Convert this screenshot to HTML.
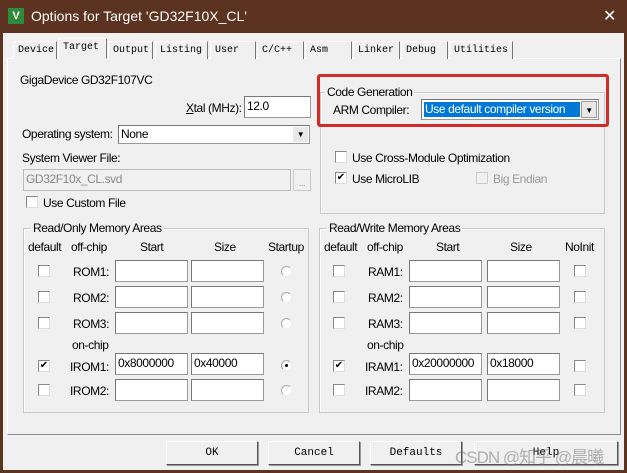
<!DOCTYPE html>
<html><head><meta charset="utf-8"><style>
*{box-sizing:border-box;margin:0;padding:0}
body{width:627px;height:473px;background:#f0f0f0;position:relative;overflow:hidden;font-family:"Liberation Sans",sans-serif;font-size:12px;letter-spacing:-0.4px;color:#000}
.a{position:absolute;white-space:nowrap}
.title{left:0;top:0;width:627px;height:33px;background:#5b3320;color:#fff;font-size:14px;letter-spacing:0}
.win{left:0;top:33px;width:627px;height:440px;border:3px solid #5b3320;border-top:0}
.tab{position:absolute;top:41px;height:18px;border:1px solid #fff;border-right-color:#777;border-bottom:0;font-family:"Liberation Mono",monospace;font-size:10px;letter-spacing:0;padding:3px 0 0 4px;background:#f0f0f0}
.panel{left:7px;top:58px;width:614px;height:377px;border:1px solid #fff;border-right-color:#888;border-bottom-color:#888}
.grp{position:absolute;border:1px solid #c8c8c8;box-shadow:inset 1px 1px #fff}
.gl{position:absolute;background:#f0f0f0;padding:0 2px;top:-8px}
.in{position:absolute;background:#fff;border:1px solid #999;border-top-color:#777;border-left-color:#777;height:22px;font-size:12px;padding:2px 2px}
.cb{position:absolute;width:12px;height:12px;background:#fff;border:1px solid #888;border-right-color:#ddd;border-bottom-color:#ddd;letter-spacing:0}
.rd{position:absolute;width:11px;height:11px;border-radius:50%;border:1px solid #aaa;border-right-color:#eee;border-bottom-color:#eee;background:#fff}
.btn{position:absolute;top:441px;height:24px;border:1px solid #fff;border-right-color:#555;border-bottom-color:#555;box-shadow:1px 1px #999;text-align:center;font-family:"Liberation Mono",monospace;font-size:11px;letter-spacing:0;padding-top:5px}
</style></head><body>
<div class="a title"><div class="a" style="left:8px;top:8px;width:16px;height:16px;background:#2f8a3a;color:#fff;font-size:11px;font-weight:bold;text-align:center;line-height:16px">V</div><div class="a" style="left:31px;top:8px">Options for Target 'GD32F10X_CL'</div><div class="a" style="left:603px;top:6px;font-size:16px">✕</div></div>
<div class="a win"></div>
<div class="a panel"></div>
<div class="tab" style="left:13px;width:44px">Device</div>
<div class="tab" style="left:58px;width:49px;top:38px;height:21px;border-bottom:1px solid #f0f0f0">Target</div>
<div class="tab" style="left:108px;width:45px">Output</div>
<div class="tab" style="left:155px;width:53px">Listing</div>
<div class="tab" style="left:210px;width:46px">User</div>
<div class="tab" style="left:257px;width:47px">C/C++</div>
<div class="tab" style="left:305px;width:47px">Asm</div>
<div class="tab" style="left:353px;width:47px">Linker</div>
<div class="tab" style="left:401px;width:47px">Debug</div>
<div class="tab" style="left:449px;width:64px">Utilities</div>

<div class="a" style="left:20px;top:73px">GigaDevice GD32F107VC</div>
<div class="a" style="left:186px;top:101px"><u>X</u>tal (MHz):</div>
<div class="in" style="left:244px;top:96px;width:67px">12.0</div>
<div class="a" style="left:22px;top:127px">Operating system:</div>
<div class="in" style="left:118px;top:125px;width:192px;height:19px;padding-top:1px">None<div class="a" style="right:1px;top:1px;width:15px;height:15px;background:#e8e8e8;font-size:8px;text-align:center;line-height:15px">▼</div></div>
<div class="a" style="left:22px;top:151px">System Viewer File:</div>
<div class="in" style="left:23px;top:169px;width:268px;background:#f0f0f0;color:#888;border-color:#bbb">GD32F10x_CL.svd</div>
<div class="a" style="left:293px;top:169px;width:18px;height:22px;border:1px solid #ccc;font-size:9px;color:#888;text-align:center;line-height:26px">...</div>
<div class="cb" style="left:26px;top:196px"></div><div class="a" style="left:43px;top:196px">Use Custom File</div>

<div class="a" style="left:317px;top:74px;width:292px;height:53px;border:3px solid #d42a2a;border-radius:3px;z-index:2"></div>
<div class="grp" style="left:320px;top:92px;width:285px;height:122px"><div class="gl" style="left:4px">Code Generation</div></div>
<div class="a" style="left:333px;top:103px">ARM Compiler:</div>
<div class="in" style="left:421px;top:99px;width:178px;height:21px;padding:1px">
<div class="a" style="left:2px;top:2px;width:156px;height:15px;background:#0078d7;color:#fff;padding-left:1px;line-height:15px">Use default compiler version</div>
<div class="a" style="right:1px;top:1px;width:16px;height:17px;background:#e8e8e8;font-size:8px;text-align:center;line-height:17px;border:1px solid #999">▼</div></div>
<div class="cb" style="left:335px;top:151px"></div><div class="a" style="left:352px;top:151px">Use Cross-Module Optimization</div>
<div class="cb" style="left:335px;top:172px;font-size:10px;line-height:10px;text-align:center">✔</div><div class="a" style="left:352px;top:172px">Use MicroLIB</div>
<div class="cb" style="left:476px;top:172px;background:#f0f0f0;border-color:#ccc"></div><div class="a" style="left:493px;top:172px;color:#999">Big Endian</div>

<div class="grp" style="left:23px;top:228px;width:286px;height:185px"><div class="gl" style="left:7px">Read/Only Memory Areas</div></div>
<div class="a" style="left:28px;top:240px">default</div><div class="a" style="left:71px;top:240px">off-chip</div><div class="a" style="left:140px;top:240px">Start</div><div class="a" style="left:214px;top:240px">Size</div><div class="a" style="left:268px;top:240px">Startup</div>
<div class="a" style="left:72px;top:338px">on-chip</div>

<div class="grp" style="left:319px;top:228px;width:286px;height:185px"><div class="gl" style="left:7px">Read/Write Memory Areas</div></div>
<div class="a" style="left:324px;top:240px">default</div><div class="a" style="left:367px;top:240px">off-chip</div><div class="a" style="left:436px;top:240px">Start</div><div class="a" style="left:510px;top:240px">Size</div><div class="a" style="left:565px;top:240px">NoInit</div>
<div class="a" style="left:367px;top:338px">on-chip</div>

<div class="cb" style="left:38px;top:265px"></div><div class="a" style="left:73px;top:265px">ROM1:</div><div class="in" style="left:115px;top:260px;width:73px"></div><div class="in" style="left:191px;top:260px;width:73px"></div><div class="rd" style="left:281px;top:266px"></div>
<div class="cb" style="left:38px;top:291px"></div><div class="a" style="left:73px;top:291px">ROM2:</div><div class="in" style="left:115px;top:286px;width:73px"></div><div class="in" style="left:191px;top:286px;width:73px"></div><div class="rd" style="left:281px;top:292px"></div>
<div class="cb" style="left:38px;top:317px"></div><div class="a" style="left:73px;top:317px">ROM3:</div><div class="in" style="left:115px;top:312px;width:73px"></div><div class="in" style="left:191px;top:312px;width:73px"></div><div class="rd" style="left:281px;top:318px"></div>
<div class="cb" style="left:38px;top:360px;font-size:10px;line-height:10px;text-align:center">✔</div><div class="a" style="left:70px;top:360px">IROM1:</div><div class="in" style="left:115px;top:353px;width:73px">0x8000000</div><div class="in" style="left:191px;top:353px;width:73px">0x40000</div><div class="rd" style="left:281px;top:360px"><div class="a" style="left:3px;top:3px;width:3px;height:3px;background:#000;border-radius:50%"></div></div>
<div class="cb" style="left:38px;top:384px"></div><div class="a" style="left:70px;top:384px">IROM2:</div><div class="in" style="left:115px;top:379px;width:73px"></div><div class="in" style="left:191px;top:379px;width:73px"></div><div class="rd" style="left:281px;top:385px"></div>

<div class="cb" style="left:333px;top:265px"></div><div class="a" style="left:368px;top:265px">RAM1:</div><div class="in" style="left:409px;top:260px;width:73px"></div><div class="in" style="left:487px;top:260px;width:73px"></div><div class="cb" style="left:574px;top:265px"></div>
<div class="cb" style="left:333px;top:291px"></div><div class="a" style="left:368px;top:291px">RAM2:</div><div class="in" style="left:409px;top:286px;width:73px"></div><div class="in" style="left:487px;top:286px;width:73px"></div><div class="cb" style="left:574px;top:291px"></div>
<div class="cb" style="left:333px;top:317px"></div><div class="a" style="left:368px;top:317px">RAM3:</div><div class="in" style="left:409px;top:312px;width:73px"></div><div class="in" style="left:487px;top:312px;width:73px"></div><div class="cb" style="left:574px;top:317px"></div>
<div class="cb" style="left:333px;top:360px;font-size:10px;line-height:10px;text-align:center">✔</div><div class="a" style="left:365px;top:360px">IRAM1:</div><div class="in" style="left:409px;top:353px;width:73px">0x20000000</div><div class="in" style="left:487px;top:353px;width:73px">0x18000</div><div class="cb" style="left:574px;top:360px"></div>
<div class="cb" style="left:333px;top:384px"></div><div class="a" style="left:365px;top:384px">IRAM2:</div><div class="in" style="left:409px;top:379px;width:73px"></div><div class="in" style="left:487px;top:379px;width:73px"></div><div class="cb" style="left:574px;top:384px"></div>

<div class="btn" style="left:166px;width:92px">OK</div>
<div class="btn" style="left:268px;width:92px">Cancel</div>
<div class="btn" style="left:370px;width:92px">Defaults</div>
<div class="btn" style="left:474px;width:144px">Help</div>
<div class="a" style="left:455px;top:443px;font-size:17px;letter-spacing:-1px;color:rgba(120,120,120,0.55);font-family:'Liberation Sans','Noto Sans CJK SC',sans-serif">CSDN @知乎 @晨曦</div>
</body></html>
